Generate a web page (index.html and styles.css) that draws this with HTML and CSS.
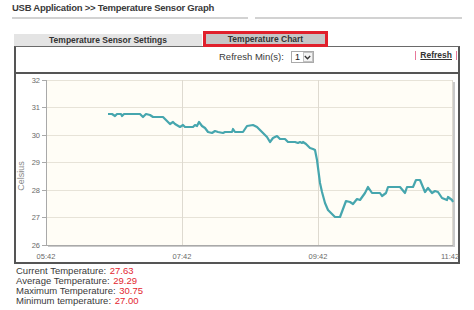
FILE: index.html
```html
<!DOCTYPE html>
<html>
<head>
<meta charset="utf-8">
<title>Temperature Sensor Graph</title>
<link rel="stylesheet" href="styles.css">
</head>
<body>
<div class="page">
  <h1 class="title">USB Application &gt;&gt; Temperature Sensor Graph</h1>
  <div class="rule"><span class="rule-a"></span><span class="rule-b"></span></div>
  <div class="tabs">
    <div class="tab">Temperature Sensor Settings</div>
    <div class="tab active">Temperature Chart</div>
  </div>
  <div class="panel">
    <div class="toolbar">
      <div class="refresh-min">
        <span class="label">Refresh Min(s):</span>
        <span class="select"><span class="select-value">1</span><span class="select-arrow"><svg width="7" height="5" viewBox="0 0 7 5"><path d="M0.8 1 L3.5 3.8 L6.2 1" fill="none" stroke="#333" stroke-width="1.3"/></svg></span></span>
      </div>
      <div class="refresh-link">
        <span class="bar"></span><a class="link" href="#">Refresh</a><span class="bar"></span>
      </div>
    </div>
    <div class="chart">
      <svg class="chart-svg" width="442" height="188" viewBox="16 74 442 188">
        <rect x="48" y="82" width="407" height="165" fill="#c9c9c9"/>
        <rect x="46" y="80" width="407" height="165" fill="#fffdf6"/>
        <g stroke="#e7e3d8" stroke-width="1">
          <line x1="46" y1="80.5" x2="453" y2="80.5"/>
          <line x1="46" y1="107.5" x2="453" y2="107.5"/>
          <line x1="46" y1="135.5" x2="453" y2="135.5"/>
          <line x1="46" y1="162.5" x2="453" y2="162.5"/>
          <line x1="46" y1="190.5" x2="453" y2="190.5"/>
          <line x1="46" y1="217.5" x2="453" y2="217.5"/>
        </g>
        <g stroke="#dedad0" stroke-width="1">
          <line x1="182.5" y1="80" x2="182.5" y2="245"/>
          <line x1="318.5" y1="80" x2="318.5" y2="245"/>
          <line x1="452.5" y1="80" x2="452.5" y2="245"/>
        </g>
        <g stroke="#a9a9a9" stroke-width="1">
          <line x1="46.5" y1="80" x2="46.5" y2="245"/>
          <line x1="46" y1="245.5" x2="453" y2="245.5"/>
          <line x1="42" y1="80.5" x2="46" y2="80.5"/>
          <line x1="42" y1="107.5" x2="46" y2="107.5"/>
          <line x1="42" y1="135.5" x2="46" y2="135.5"/>
          <line x1="42" y1="162.5" x2="46" y2="162.5"/>
          <line x1="42" y1="190.5" x2="46" y2="190.5"/>
          <line x1="42" y1="217.5" x2="46" y2="217.5"/>
          <line x1="42" y1="245.5" x2="46" y2="245.5"/>
        </g>
        <g class="axis-label" text-anchor="end">
          <text x="40" y="83">32</text>
          <text x="40" y="110">31</text>
          <text x="40" y="138">30</text>
          <text x="40" y="165">29</text>
          <text x="40" y="193">28</text>
          <text x="40" y="220">27</text>
          <text x="40" y="248">26</text>
        </g>
        <g class="axis-label" text-anchor="middle">
          <text x="46" y="259">05:42</text>
          <text x="182" y="259">07:42</text>
          <text x="318" y="259">09:42</text>
          <text x="450" y="259">11:42</text>
        </g>
        <text class="axis-title" transform="translate(24 176) rotate(-90)" text-anchor="middle">Celsius</text>
        <path fill="none" stroke="#46a6ae" stroke-width="2.2" stroke-linejoin="round" d="M108,114 L112,114 L115,116 L117,114 L121,114 L122,116 L124,114 L140,114 L143,117 L146,114 L150,115 L153,117 L163,117 L167,121 L170,124 L173,122 L175,124 L180,127 L183,125 L185,127 L193,127 L195,125 L197,126 L199,122 L202,126 L205,128 L208,132 L212,133 L215,131 L218,132 L223,133 L225,132 L232,132 L233,129 L235,132 L243,132 L247,126 L253,125 L257,127 L262,132 L267,137 L270,142 L273,138 L277,136 L280,139 L285,139 L288,142 L295,142 L298,143 L300,142 L302,143 L303,142 L306,144 L310,148 L313,149 L315,150 L317,160 L320,183 L322,192 L325,203 L328,210 L332,214 L335,217 L340,217 L343,209 L346,201 L350,202 L353,204 L357,199 L360,200 L365,193 L368,187 L372,193 L380,193 L382,196 L386,193 L388,187 L400,187 L405,193 L407,187 L413,187 L416,180 L420,180 L425,192 L428,188 L432,193 L435,191 L438,192 L442,198 L447,200 L448,197 L452,200 L453,202"/>
      </svg>
    </div>
  </div>
  <div class="stats">
    <div class="stat">Current Temperature: <span class="value">27.63</span></div>
    <div class="stat">Average Temperature: <span class="value">29.29</span></div>
    <div class="stat">Maximum Temperature: <span class="value">30.75</span></div>
    <div class="stat">Minimum temperature: <span class="value">27.00</span></div>
  </div>
</div>
</body>
</html>
```

FILE: styles.css
```css
html, body {
  margin: 0;
  padding: 0;
  background: #ffffff;
}

.page {
  width: 474px;
  height: 310px;
  overflow: hidden;
  font-family: "Liberation Sans", Arial, sans-serif;
  color: #333333;
}

.title {
  margin: 0;
  padding: 1px 0 0 12px;
  height: 15px;
  font-size: 9.5px;
  line-height: 14px;
  font-weight: bold;
  letter-spacing: -0.25px;
  color: #3a3a3a;
}

.rule {
  display: flex;
  margin: 1px 0 0 12px;
  height: 2px;
}

.rule-a {
  width: 236px;
  background: #d2d2d2;
}

.rule-b {
  width: 207px;
  margin-left: 7px;
  background: #d2d2d2;
}

.tabs {
  display: flex;
  align-items: flex-end;
  margin: 12px 0 -1px 14px;
  height: 16px;
  position: relative;
  z-index: 1;
}

.tab {
  box-sizing: border-box;
  width: 188px;
  height: 12px;
  margin-bottom: 1px;
  background: #e4e4e4;
  font-size: 8.5px;
  line-height: 12px;
  font-weight: bold;
  text-align: center;
  color: #333333;
}

.tab.active {
  width: 125px;
  height: 16px;
  margin: 0 0 0 1px;
  border: 3px solid #e0202c;
  background: #c6c6c6;
  line-height: 10px;
}

.panel {
  box-sizing: border-box;
  width: 446px;
  margin-left: 14px;
  border-top: 1px solid #6a6a6a;
  border-left: 2px solid #555555;
  border-right: 2px solid #555555;
  border-bottom: 2px solid #555555;
}

.toolbar {
  display: flex;
  justify-content: space-between;
  align-items: flex-start;
  box-sizing: border-box;
  height: 27px;
  padding: 4px 1px 0 203px;
  border-bottom: 2px solid #555555;
}

.refresh-min {
  display: flex;
  align-items: center;
  height: 12px;
}

.label {
  font-size: 9.5px;
  line-height: 12px;
  color: #3a3a3a;
}

.select {
  display: inline-flex;
  align-items: center;
  box-sizing: border-box;
  height: 12px;
  margin-left: 7px;
  border: 1px solid #aaaaaa;
  background: #ffffff;
}

.select-value {
  font-size: 9px;
  line-height: 10px;
  padding: 0 3px 0 3px;
  color: #222222;
}

.select-arrow {
  display: flex;
  align-items: center;
  justify-content: center;
  box-sizing: border-box;
  width: 10px;
  height: 10px;
  border: 1px solid #c2c2c2;
  background: #f4f4f4;
}

.refresh-link {
  display: flex;
  align-items: center;
  height: 10px;
  margin-top: -1px;
}

.bar {
  width: 1px;
  height: 9px;
  background: #e8789a;
}

.link {
  margin: 0 4px;
  font-size: 8.5px;
  line-height: 10px;
  font-weight: bold;
  color: #333333;
  text-decoration: underline;
}

.chart {
  height: 188px;
}

.chart-svg {
  display: block;
  overflow: visible;
}

.axis-label {
  font-family: "Liberation Sans", Arial, sans-serif;
  font-size: 7.5px;
  fill: #6a6a6a;
}

.axis-title {
  font-family: "Liberation Sans", Arial, sans-serif;
  font-size: 9px;
  fill: #8a8a8a;
}

.stats {
  margin: 2px 0 0 16px;
}

.stat {
  font-size: 9.5px;
  line-height: 10px;
  color: #3a3a3a;
}

.value {
  color: #e3262f;
  margin-left: 1px;
}
```
